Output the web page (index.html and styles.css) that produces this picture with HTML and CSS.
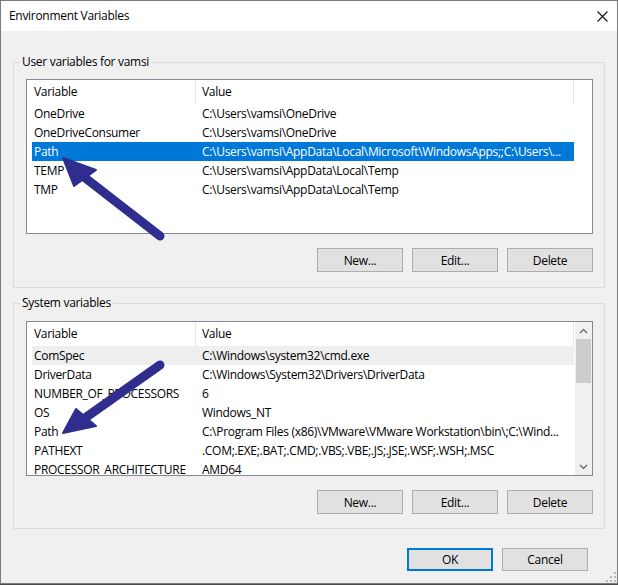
FILE: index.html
```html
<!DOCTYPE html>
<html lang="en">
<head>
    <meta charset="UTF-8">
    <title>Environment Variables</title>
    <link rel="stylesheet" href="styles.css">
</head>
<body>
    <div class="window">
        <div class="titlebar">
            <span class="title">Environment Variables</span>
            <svg class="close" width="11" height="11" viewBox="0 0 11 11">
                <path d="M0.5 0.5 L10.5 10.5 M10.5 0.5 L0.5 10.5" stroke="#111" stroke-width="1.1" fill="none"/>
            </svg>
        </div>
        <div class="content">
            <fieldset class="group">
                <legend>User variables for vamsi</legend>
                <div class="list">
                    <div class="list-main">
                        <div class="head">
                            <span class="col-name">Variable</span>
                            <span class="col-value">Value</span>
                        </div>
                        <div class="row"><span class="col-name">OneDrive</span><span class="col-value">C:\Users\vamsi\OneDrive</span></div>
                        <div class="row"><span class="col-name">OneDriveConsumer</span><span class="col-value">C:\Users\vamsi\OneDrive</span></div>
                        <div class="row selected"><span class="col-name">Path</span><span class="col-value">C:\Users\vamsi\AppData\Local\Microsoft\WindowsApps;;C:\Users\...</span></div>
                        <div class="row"><span class="col-name">TEMP</span><span class="col-value">C:\Users\vamsi\AppData\Local\Temp</span></div>
                        <div class="row"><span class="col-name">TMP</span><span class="col-value">C:\Users\vamsi\AppData\Local\Temp</span></div>
                    </div>
                </div>
                <div class="buttons">
                    <button class="btn">New...</button>
                    <button class="btn">Edit...</button>
                    <button class="btn">Delete</button>
                </div>
            </fieldset>

            <fieldset class="group system">
                <legend>System variables</legend>
                <div class="list">
                    <div class="list-main">
                        <div class="head">
                            <span class="col-name">Variable</span>
                            <span class="col-value">Value</span>
                        </div>
                        <div class="row hover"><span class="col-name">ComSpec</span><span class="col-value">C:\Windows\system32\cmd.exe</span></div>
                        <div class="row"><span class="col-name">DriverData</span><span class="col-value">C:\Windows\System32\Drivers\DriverData</span></div>
                        <div class="row"><span class="col-name">NUMBER_OF_PROCESSORS</span><span class="col-value">6</span></div>
                        <div class="row"><span class="col-name">OS</span><span class="col-value">Windows_NT</span></div>
                        <div class="row"><span class="col-name">Path</span><span class="col-value">C:\Program Files (x86)\VMware\VMware Workstation\bin\;C:\Wind...</span></div>
                        <div class="row"><span class="col-name">PATHEXT</span><span class="col-value">.COM;.EXE;.BAT;.CMD;.VBS;.VBE;.JS;.JSE;.WSF;.WSH;.MSC</span></div>
                        <div class="row"><span class="col-name">PROCESSOR_ARCHITECTURE</span><span class="col-value">AMD64</span></div>
                    </div>
                    <div class="scrollbar">
                        <div class="sb-btn">
                            <svg width="9" height="6" viewBox="0 0 9 6"><path d="M1 5 L4.5 1.5 L8 5" stroke="#606060" stroke-width="1.2" fill="none"/></svg>
                        </div>
                        <div class="sb-thumb"></div>
                        <div class="sb-track"></div>
                        <div class="sb-btn">
                            <svg width="9" height="6" viewBox="0 0 9 6"><path d="M1 1 L4.5 4.5 L8 1" stroke="#606060" stroke-width="1.2" fill="none"/></svg>
                        </div>
                    </div>
                </div>
                <div class="buttons">
                    <button class="btn">New...</button>
                    <button class="btn">Edit...</button>
                    <button class="btn">Delete</button>
                </div>
            </fieldset>

            <div class="footer">
                <button class="btn default">OK</button>
                <button class="btn">Cancel</button>
            </div>
        </div>

        <!-- resize grip -->
        <svg class="grip" width="10" height="10" viewBox="0 0 10 10" fill="#b8b8b8">
            <rect x="8" y="0" width="2" height="2"/>
            <rect x="4" y="4" width="2" height="2"/>
            <rect x="8" y="4" width="2" height="2"/>
            <rect x="0" y="8" width="2" height="2"/>
            <rect x="4" y="8" width="2" height="2"/>
            <rect x="8" y="8" width="2" height="2"/>
        </svg>

        <!-- annotation arrows drawn over the dialog -->
        <svg class="arrows" width="618" height="584" viewBox="0 0 618 584">
            <g fill="#2f2e8f" stroke="#2f2e8f">
                <line x1="160" y1="236" x2="84" y2="177" stroke-width="9" stroke-linecap="round"/>
                <polygon points="63,158 74,186 96,170" stroke-width="2" stroke-linejoin="round"/>
                <line x1="160" y1="365" x2="85" y2="418" stroke-width="9" stroke-linecap="round"/>
                <polygon points="63,433 76,409 96,426" stroke-width="2" stroke-linejoin="round"/>
            </g>
        </svg>
    </div>
</body>
</html>
```

FILE: styles.css
```css
* {
    margin: 0;
    padding: 0;
    box-sizing: border-box;
}
body {
    background: #4a4a4a;
    font-family: "Open Sans", "Noto Sans", sans-serif;
    font-size: 12px;
    letter-spacing: -0.3px;
    color: #000;
}
.window {
    position: relative;
    display: flex;
    flex-direction: column;
    width: 618px;
    height: 584px;
    border: 1px solid #7a7a7a;
    background: #f0f0f0;
}
.titlebar {
    display: flex;
    align-items: center;
    height: 30px;
    padding: 0 9px 0 8px;
    background: #fff;
}
.title {
    line-height: 16px;
}
.close {
    margin-left: auto;
}
.content {
    flex: 1;
    padding: 23px 12px 0 12px;
}

/* group boxes */
.group {
    width: 592px;
    min-width: 0;
    margin: 0;
    padding: 0 11px 15px 12px;
    border: 1px solid #dcdcdc;
}
.group.system {
    margin-top: 7px;
    padding-bottom: 14px;
}
.group legend {
    margin-left: -6px;
    padding: 0 2px;
    line-height: 16px;
}

/* list views */
.list {
    display: flex;
    height: 155px;
    margin-top: 9px;
    border: 1px solid #828790;
    background: #fff;
    overflow: hidden;
}
.system .list {
    margin-top: 10px;
}
.list-main {
    flex: 1;
    min-width: 0;
}
.head,
.row {
    display: flex;
    width: 542px;
    margin-left: 5px;
    white-space: nowrap;
}
.head {
    height: 24px;
    line-height: 24px;
}
.row {
    height: 19px;
    line-height: 19px;
}
.col-name {
    width: 164px;
    padding-left: 2px;
    overflow: hidden;
}
.col-value {
    flex: 1;
    padding-left: 6px;
    overflow: hidden;
}
.head .col-name,
.head .col-value {
    border-right: 1px solid #e5e5e5;
}
.row .col-name {
    padding-right: 1px;
}
.row.selected {
    background: #0078d7;
    color: #fff;
}
.row.hover {
    background: #efefef;
}

/* scrollbar */
.scrollbar {
    display: flex;
    flex-direction: column;
    width: 17px;
    background: #f0f0f0;
}
.sb-btn {
    display: flex;
    align-items: center;
    justify-content: center;
    height: 17px;
}
.sb-thumb {
    height: 44px;
    margin: 0 1px;
    background: #cdcdcd;
}
.sb-track {
    flex: 1;
}

/* buttons */
.buttons {
    display: flex;
    justify-content: flex-end;
    gap: 9px;
    margin-top: 14px;
}
.btn {
    width: 86px;
    height: 24px;
    border: 1px solid #adadad;
    background: #e1e1e1;
    font-family: inherit;
    font-size: 12px;
    letter-spacing: inherit;
    color: #000;
}
.btn.default {
    border: 2px solid #0078d7;
}
.footer {
    display: flex;
    justify-content: flex-end;
    gap: 9px;
    margin-top: 19px;
    padding-right: 17px;
}
.footer .btn {
    height: 23px;
}

.grip {
    position: absolute;
    right: 1px;
    bottom: 1px;
}
.arrows {
    position: absolute;
    left: -1px;
    top: -1px;
    pointer-events: none;
}
```
